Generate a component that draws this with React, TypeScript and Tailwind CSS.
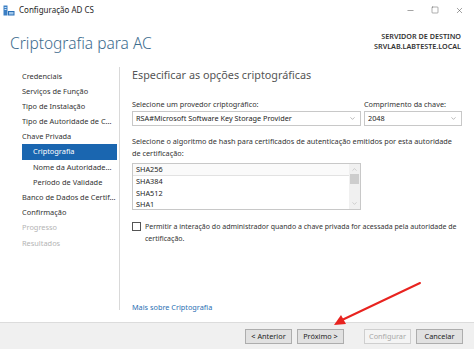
import { ChevronDown, ChevronUp, Minus, Square, X } from 'lucide-react'

const font = { fontFamily: '"Noto Sans", "Open Sans", sans-serif' }

const steps = [
  { label: 'Credenciais', indent: false },
  { label: 'Serviços de Função', indent: false },
  { label: 'Tipo de Instalação', indent: false },
  { label: 'Tipo de Autoridade de C...', indent: false },
  { label: 'Chave Privada', indent: false },
  { label: 'Criptografia', indent: true, active: true },
  { label: 'Nome da Autoridade...', indent: true },
  { label: 'Período de Validade', indent: true },
  { label: 'Banco de Dados de Certif...', indent: false },
  { label: 'Confirmação', indent: false },
  { label: 'Progresso', indent: false, disabled: true },
  { label: 'Resultados', indent: false, disabled: true },
]

function AppIcon() {
  return (
    <svg width="12" height="11" viewBox="0 0 12 11">
      <rect x="0.5" y="0.5" width="4" height="10" fill="#3b7fc4" />
      <rect x="1.5" y="2" width="2" height="1" fill="#cfe3f6" />
      <rect x="1.5" y="4" width="2" height="1" fill="#cfe3f6" />
      <rect x="5" y="6" width="6.5" height="4.5" fill="#2a6fb5" />
      <rect x="6" y="7" width="4.5" height="2.5" fill="#9fc6ea" />
    </svg>
  )
}

function Combo({ value, className }: { value: string; className: string }) {
  return (
    <div className={`flex h-[15px] items-center border border-[#c8c8c8] bg-white pl-[3px] pr-[4px] ${className}`}>
      <span className="flex-1 truncate text-[7.3px] text-[#1e1e1e]">{value}</span>
      <ChevronDown size={7} strokeWidth={2} className="text-[#8a8a8a]" />
    </div>
  )
}

function Button({ label, disabled }: { label: string; disabled?: boolean }) {
  return (
    <div
      className={`flex h-[15px] w-[47px] items-center justify-center border text-[7.3px] ${
        disabled ? 'border-[#cfcfcf] bg-[#f4f4f4] text-[#a8a8a8]' : 'border-[#adadad] bg-[#e1e1e1] text-[#1e1e1e]'
      }`}
    >
      {label}
    </div>
  )
}

export default function App() {
  return (
    <div className="relative flex h-[349px] w-[474px] flex-col overflow-hidden bg-white" style={font}>
      {/* Title bar */}
      <div className="flex h-[20px] shrink-0 items-center pl-[3px]">
        <AppIcon />
        <span className="ml-[4px] text-[8px] text-[#1e1e1e]">Configuração AD CS</span>
        <div className="ml-auto flex items-center gap-[16px] pr-[10px] text-[#333]">
          <Minus size={9} strokeWidth={1.2} />
          <Square size={8} strokeWidth={1.2} />
          <X size={9} strokeWidth={1.2} />
        </div>
      </div>

      {/* Header */}
      <div className="flex h-[47px] shrink-0 items-start justify-between px-[10px]">
        <div className="mt-[16px] text-[15.5px] font-light leading-none text-[#3d6c8e]">Criptografia para AC</div>
        <div className="mt-[12px] pr-[3px] text-right text-[7.2px] font-semibold leading-[9.5px] text-[#333]">
          <div>SERVIDOR DE DESTINO</div>
          <div>SRVLAB.LABTESTE.LOCAL</div>
        </div>
      </div>

      {/* Body */}
      <div className="flex min-h-0 flex-1">
        <div className="mb-[12px] w-[120px] shrink-0 border-r border-[#d9d9d9] pt-[1.5px]">
          {steps.map((s) => (
            <div
              key={s.label}
              className={`ml-[22px] mr-[2px] flex h-[15.2px] items-center truncate text-[7.4px] ${
                s.indent ? 'pl-[11px]' : ''
              } ${s.active ? 'bg-[#1a66b0] text-white' : s.disabled ? 'text-[#b4b4b4]' : 'text-[#333]'}`}
            >
              {s.label}
            </div>
          ))}
        </div>

        <div className="flex flex-1 flex-col pl-[12px] pr-[12px] pt-[3px]">
          <div className="text-[10.8px] leading-none text-[#555]">Especificar as opções criptográficas</div>

          <div className="mt-[18px] flex gap-[3px]">
            <div className="w-[229px]">
              <div className="mb-[2px] text-[7.3px] leading-[10px] text-[#333]">Selecione um provedor criptográfico:</div>
              <Combo value="RSA#Microsoft Software Key Storage Provider" className="w-full" />
            </div>
            <div className="flex-1">
              <div className="mb-[2px] text-[7.3px] leading-[10px] text-[#333]">Comprimento da chave:</div>
              <Combo value="2048" className="w-full" />
            </div>
          </div>

          <div className="mt-[9px] text-[7.3px] leading-[12px] text-[#333]">
            Selecione o algoritmo de hash para certificados de autenticação emitidos por esta autoridade de certificação:
          </div>

          <div className="mt-[4px] flex h-[47px] w-[229px] overflow-hidden border border-[#c8c8c8] bg-white">
            <div className="flex-1 text-[7.3px] leading-[11.5px] text-[#1e1e1e]">
              <div className="border-b border-[#e2e2e2] bg-[#fafafa] pl-[3px]">SHA256</div>
              <div className="pl-[3px]">SHA384</div>
              <div className="pl-[3px]">SHA512</div>
              <div className="pl-[3px]">SHA1</div>
            </div>
            <div className="flex w-[11px] flex-col items-center bg-[#f0f0f0]">
              <ChevronUp size={7} strokeWidth={1.5} className="mt-[2px] text-[#a0a0a0]" />
              <div className="mt-[1px] h-[10px] w-[9px] bg-[#cdcdcd]" />
              <div className="flex-1" />
              <ChevronDown size={7} strokeWidth={1.5} className="mb-[2px] text-[#a0a0a0]" />
            </div>
          </div>

          <div className="mt-[11px] flex items-start gap-[4px]">
            <div className="mt-[1.5px] h-[9px] w-[9px] shrink-0 border border-[#555] bg-white" />
            <div className="text-[7px] leading-[12px] text-[#333]">
              Permitir a interação do administrador quando a chave privada for acessada pela autoridade de certificação.
            </div>
          </div>

          <div className="flex-1" />
          <div className="mb-[9px] text-[7.3px] text-[#2b6fb3]">Mais sobre Criptografia</div>
        </div>
      </div>

      {/* Footer */}
      <div className="flex h-[27px] shrink-0 items-center justify-end gap-[5px] border-t border-[#dcdcdc] bg-[#f0f0f0] pr-[11px]">
        <Button label="< Anterior" />
        <Button label="Próximo >" />
        <div className="w-[10px]" />
        <Button label="Configurar" disabled />
        <Button label="Cancelar" />
      </div>

      {/* Red arrow annotation */}
      <svg className="pointer-events-none absolute left-0 top-0" width="474" height="349" viewBox="0 0 474 349">
        <line x1="420" y1="283" x2="342" y2="320" stroke="#e8231f" strokeWidth="2" strokeLinecap="round" />
        <polygon points="334,325 341,315 346,324" fill="#e8231f" />
      </svg>
    </div>
  )
}
